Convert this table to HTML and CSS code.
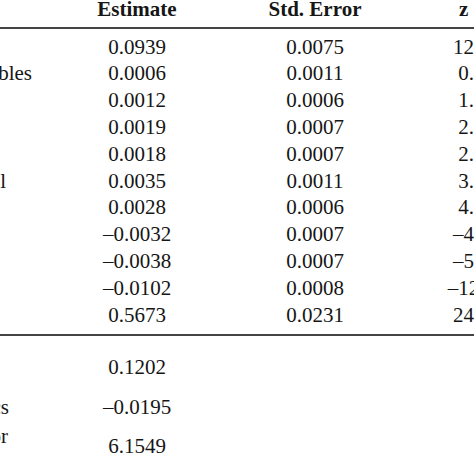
FILE: index.html
```html
<!DOCTYPE html>
<html lang="en">

<head>
    <meta charset="UTF-8">
    <meta name="viewport" content="width=device-width, initial-scale=1.0">
    <title>Model Estimates</title>
    <link rel="stylesheet" href="styles.css">
</head>

<body>
    <div class="tbl">
        <!-- header -->
        <div class="row head">
            <div class="lab"></div>
            <div>Estimate</div>
            <div>Std. Error</div>
            <div class="zhead">z</div>
        </div>

        <!-- coefficients -->
        <div class="body">
            <div class="row"><div class="lab"></div><div>0.0939</div><div>0.0075</div><div>12.5200</div></div>
            <div class="row"><div class="lab lab-a"><span>Control variables</span></div><div>0.0006</div><div>0.0011</div><div>0.5455</div></div>
            <div class="row"><div class="lab"></div><div>0.0012</div><div>0.0006</div><div>1.9677</div></div>
            <div class="row"><div class="lab"></div><div>0.0019</div><div>0.0007</div><div>2.7143</div></div>
            <div class="row"><div class="lab"></div><div>0.0018</div><div>0.0007</div><div>2.5714</div></div>
            <div class="row"><div class="lab lab-b"><span>Regional</span></div><div>0.0035</div><div>0.0011</div><div>3.1818</div></div>
            <div class="row"><div class="lab"></div><div>0.0028</div><div>0.0006</div><div>4.6667</div></div>
            <div class="row"><div class="lab"></div><div>&ndash;0.0032</div><div>0.0007</div><div>&ndash;4.5714</div></div>
            <div class="row"><div class="lab"></div><div>&ndash;0.0038</div><div>0.0007</div><div>&ndash;5.4286</div></div>
            <div class="row"><div class="lab"></div><div>&ndash;0.0102</div><div>0.0008</div><div>&ndash;12.7500</div></div>
            <div class="row"><div class="lab"></div><div>0.5673</div><div>0.0231</div><div>24.5584</div></div>
        </div>

        <!-- model statistics -->
        <div class="foot">
            <div class="row"><div class="lab"></div><div>0.1202</div><div></div><div></div></div>
            <div class="row"><div class="lab lab-c"><span>Wald statistics</span></div><div>&ndash;0.0195</div><div></div><div></div></div>
            <div class="row"><div class="lab lab-d"><span>Residual std. error</span></div><div>6.1549</div><div></div><div></div></div>
        </div>
    </div>
</body>

</html>
```
FILE: styles.css
```css
body {
    margin: 0;
    overflow: hidden;
    background-color: #fff;
    color: #161616;
    font-family: "Liberation Serif", "Times New Roman", serif;
    font-size: 21px;
}

.tbl {
    width: 474px;
}

.row {
    display: grid;
    grid-template-columns: 49px 176px 180px 164px;
    height: 26.8px;
    line-height: 26.8px;
    text-align: center;
    white-space: nowrap;
}

.head {
    height: 27px;
    line-height: 18px;
    font-weight: bold;
    border-bottom: 2px solid #444;
}

.zhead {
    text-align: left;
    padding-left: 54px;
}

.body {
    padding: 4.6px 0 6px;
    border-bottom: 2px solid #444;
}

.foot {
    padding-top: 11.8px;
}

.foot .row {
    height: 39.5px;
    line-height: 39.5px;
}

/* label column: text runs off the left edge */
.lab {
    display: flex;
    justify-content: flex-end;
    align-items: center;
    text-align: left;
}

.lab-a {
    padding-right: 17px;
}

.lab-b {
    padding-right: 43px;
}

.lab-c {
    padding-right: 40px;
}

/* first line of a longer label, sits at the top of its row */
.lab-d {
    padding-right: 41px;
    align-items: flex-start;
    line-height: 19.5px;
}
```
